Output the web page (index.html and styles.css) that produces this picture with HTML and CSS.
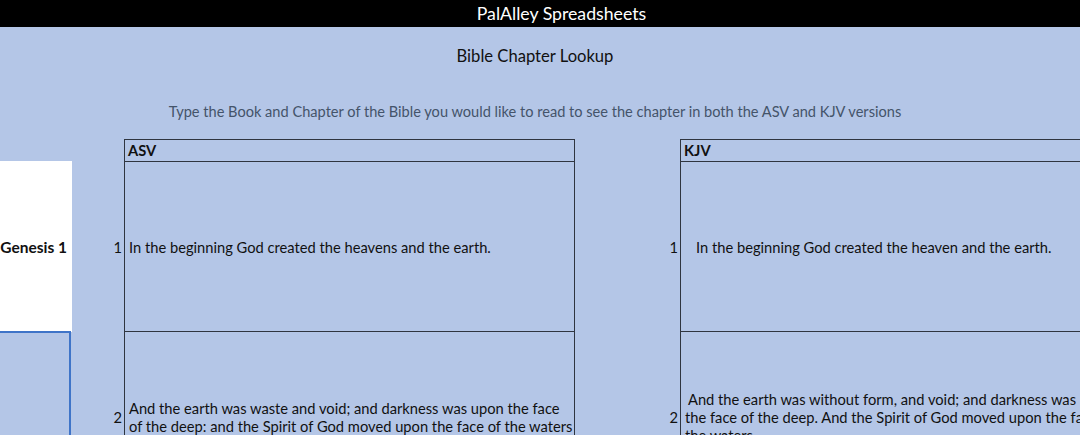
FILE: index.html
```html
<!DOCTYPE html>
<html lang="en">
<head>
<meta charset="utf-8">
<title>PalAlley Spreadsheets</title>
<link rel="stylesheet" href="styles.css">
</head>
<body>
<header class="topbar">PalAlley Spreadsheets</header>
<div class="title">Bible Chapter Lookup</div>
<div class="instr">Type the Book and Chapter of the Bible you would like to read to see the chapter in both the ASV and KJV versions</div>
<main class="sheet">
  <div class="blank"></div>
  <div class="blank"></div>
  <div class="hdr">ASV</div>
  <div class="blank"></div>
  <div class="hdr">KJV</div>

  <div class="book">Genesis 1</div>
  <div class="num">1</div>
  <div class="verse">In the beginning God created the heavens and the earth.</div>
  <div class="num">1</div>
  <div class="verse kjv1">In the beginning God created the heaven and the earth.</div>

  <div class="selected"></div>
  <div class="num">2</div>
  <div class="verse">And the earth was waste and void; and darkness was upon the face of the deep: and the Spirit of God moved upon the face of the waters</div>
  <div class="num">2</div>
  <div class="verse kjv2">And the earth was without form, and void; and darkness was upon the face of the deep. And the Spirit of God moved upon the face of the waters.</div>
</main>
</body>
</html>
```

FILE: styles.css
```css
html, body {
  margin: 0;
  padding: 0;
}
body {
  width: 1080px;
  height: 435px;
  overflow: hidden;
  background: #b4c6e7;
  font-family: Lato, "Open Sans", sans-serif;
  font-size: 14.7px;
  color: #111;
}
.topbar {
  height: 27px;
  line-height: 27px;
  background: #000;
  color: #fff;
  font-size: 17.7px;
  text-align: center;
  padding-left: 43px;
}
.title {
  height: 58px;
  line-height: 58px;
  font-size: 16.6px;
  text-align: center;
  padding-right: 10px;
  color: #111;
}
.instr {
  height: 54px;
  line-height: 54px;
  font-size: 14.6px;
  text-align: center;
  padding-right: 10px;
  color: #44546a;
}
.sheet {
  display: grid;
  grid-template-columns: 72px 52px 451px 105px 451px;
  grid-template-rows: 23px 170px 170px;
  width: 1131px;
}
.hdr {
  border: 1px solid #2f3540;
  font-weight: bold;
  padding-left: 3px;
  line-height: 20px;
}
.book {
  background: #fff;
  font-weight: bold;
  font-size: 15.5px;
  white-space: nowrap;
  display: flex;
  align-items: center;
  justify-content: flex-end;
  padding-right: 5px;
  margin-top: -1px;
}
.num {
  display: flex;
  align-items: center;
  justify-content: flex-end;
  padding-right: 2px;
}
.verse {
  border-left: 1px solid #2f3540;
  border-right: 1px solid #2f3540;
  border-bottom: 1px solid #2f3540;
  display: flex;
  align-items: center;
  padding-left: 4px;
  line-height: 18px;
}
.kjv1 {
  padding-left: 15px;
}
.kjv2 {
  text-indent: 3px;
}
.selected {
  border-top: 2px solid #3f74c8;
  border-right: 2px solid #3f74c8;
  margin-right: 1px;
  margin-top: -1px;
}
```
